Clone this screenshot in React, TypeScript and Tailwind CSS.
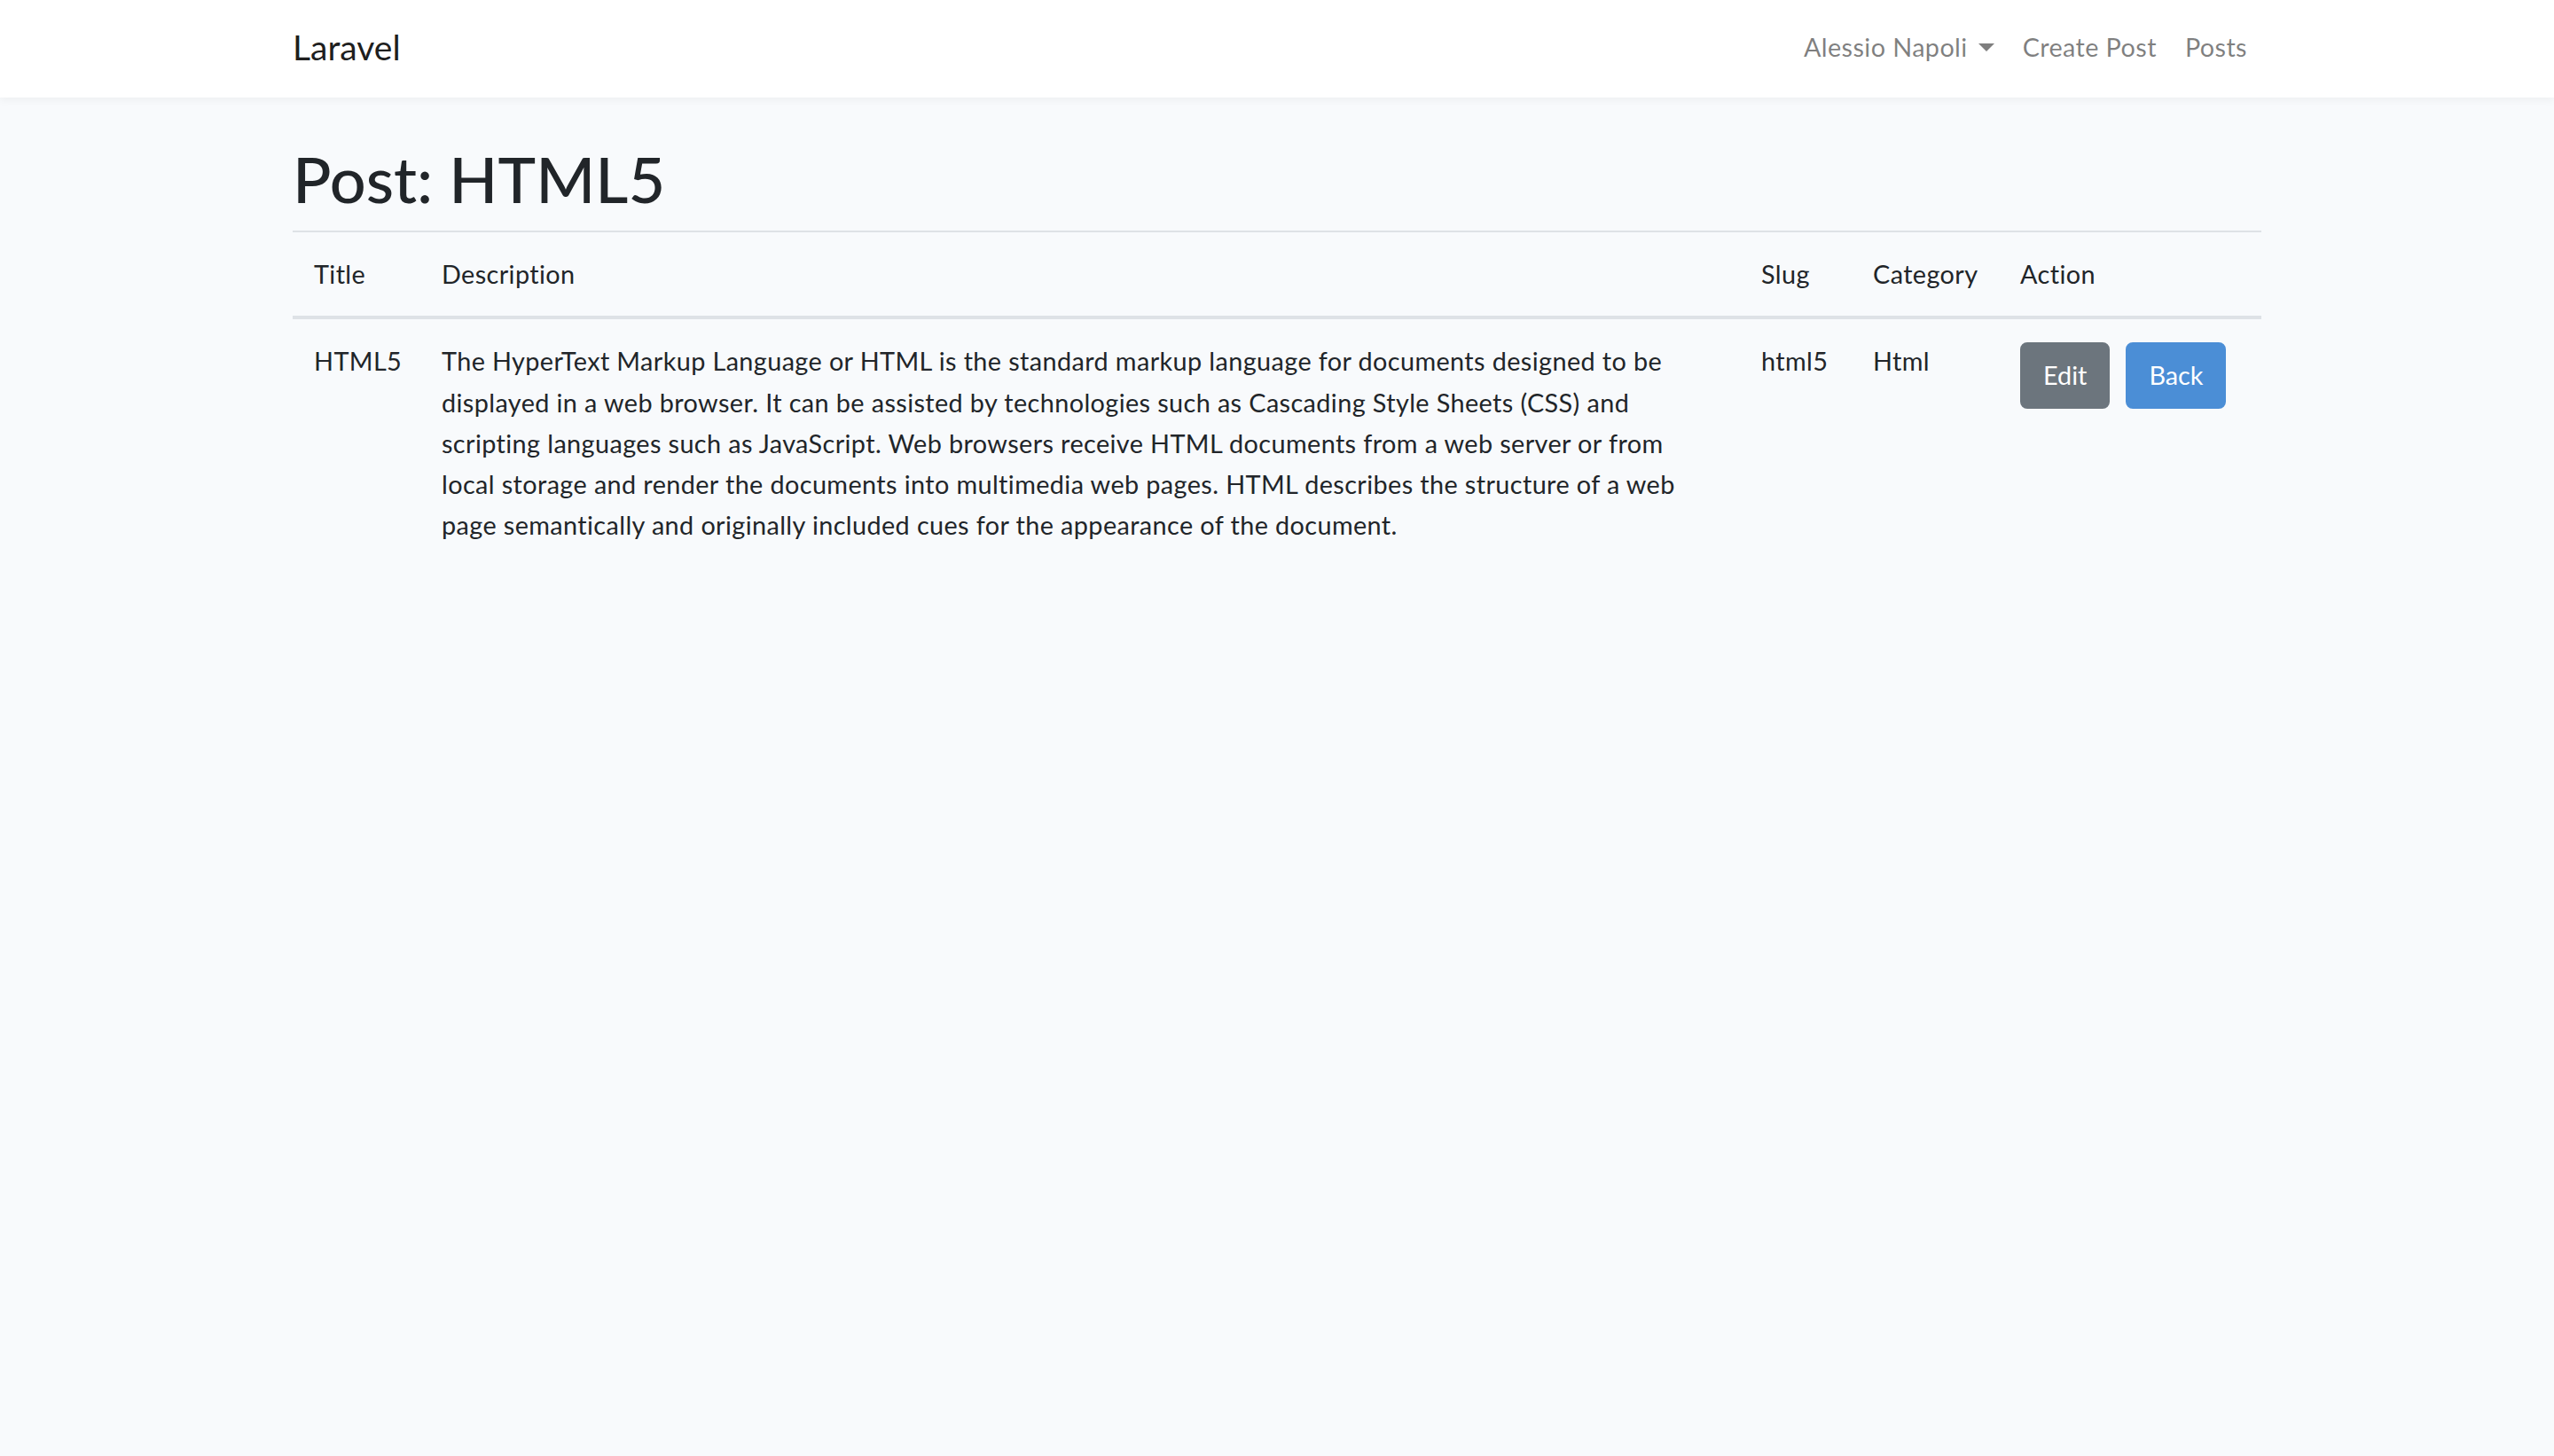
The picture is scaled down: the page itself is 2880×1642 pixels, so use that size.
import React from "react";

const lines = [
  "The HyperText Markup Language or HTML is the standard markup language for documents designed to be",
  "displayed in a web browser. It can be assisted by technologies such as Cascading Style Sheets (CSS) and",
  "scripting languages such as JavaScript. Web browsers receive HTML documents from a web server or from",
  "local storage and render the documents into multimedia web pages. HTML describes the structure of a web",
  "page semantically and originally included cues for the appearance of the document.",
];

export default function App() {
  return (
    <div
      className="min-h-[1642px] bg-[#f8fafc] text-[#212529] text-[28.8px] leading-[1.6]"
      style={{ fontFamily: "Lato, 'Noto Sans', sans-serif" }}
    >
      <nav className="bg-white h-[110px] shadow-[0_4px_8px_rgba(0,0,0,0.04)]">
        <div className="w-[2220px] mx-auto h-full flex items-center justify-between pb-[4px]">
          <span className="text-[39px] leading-[64px] text-[rgba(0,0,0,0.9)]">Laravel</span>
          <div className="flex items-center text-[rgba(0,0,0,0.5)] tracking-[0.4px]">
            <span className="px-4 flex items-center">
              Alessio Napoli
              <span className="ml-[12px] inline-block w-0 h-0 border-t-[9px] border-t-[rgba(0,0,0,0.5)] border-x-[9px] border-x-transparent" />
            </span>
            <span className="px-4">Create Post</span>
            <span className="pl-4 pr-4">Posts</span>
          </div>
        </div>
      </nav>
      <main className="pt-[48px]">
        <div className="w-[2220px] mx-auto">
          <h1 className="text-[72px] leading-[1.2] font-medium mb-[16px]">Post: HTML5</h1>
          <table className="w-full table-fixed border-collapse tracking-[0.4px]">
            <colgroup>
              <col className="w-[144px]" />
              <col className="w-[1488px]" />
              <col className="w-[126px]" />
              <col className="w-[166px]" />
              <col className="w-[296px]" />
            </colgroup>
            <thead>
              <tr>
                {["Title", "Description", "Slug", "Category", "Action"].map((h) => (
                  <th
                    key={h}
                    className="text-left font-normal p-[24px] align-bottom border-t-2 border-b-4 border-[#dee2e6]"
                  >
                    {h}
                  </th>
                ))}
              </tr>
            </thead>
            <tbody>
              <tr>
                <td className="p-[24px] align-top">HTML5</td>
                <td className="p-[24px] align-top">
                  {lines.map((l, i) => (
                    <div key={i} className="whitespace-nowrap">
                      {l}
                    </div>
                  ))}
                </td>
                <td className="p-[24px] align-top">html5</td>
                <td className="p-[24px] align-top">Html</td>
                <td className="p-[24px] align-top pt-[26px]">
                  <div className="flex gap-[18px] tracking-normal">
                    <span className="inline-block bg-[#6c757d] text-white rounded-[8px] px-[24px] py-[12px] border-2 border-[#6c757d]">
                      Edit
                    </span>
                    <span className="inline-block bg-[#4b8ed6] text-white rounded-[8px] px-[24px] py-[12px] border-2 border-[#4b8ed6]">
                      Back
                    </span>
                  </div>
                </td>
              </tr>
            </tbody>
          </table>
        </div>
      </main>
    </div>
  );
}
